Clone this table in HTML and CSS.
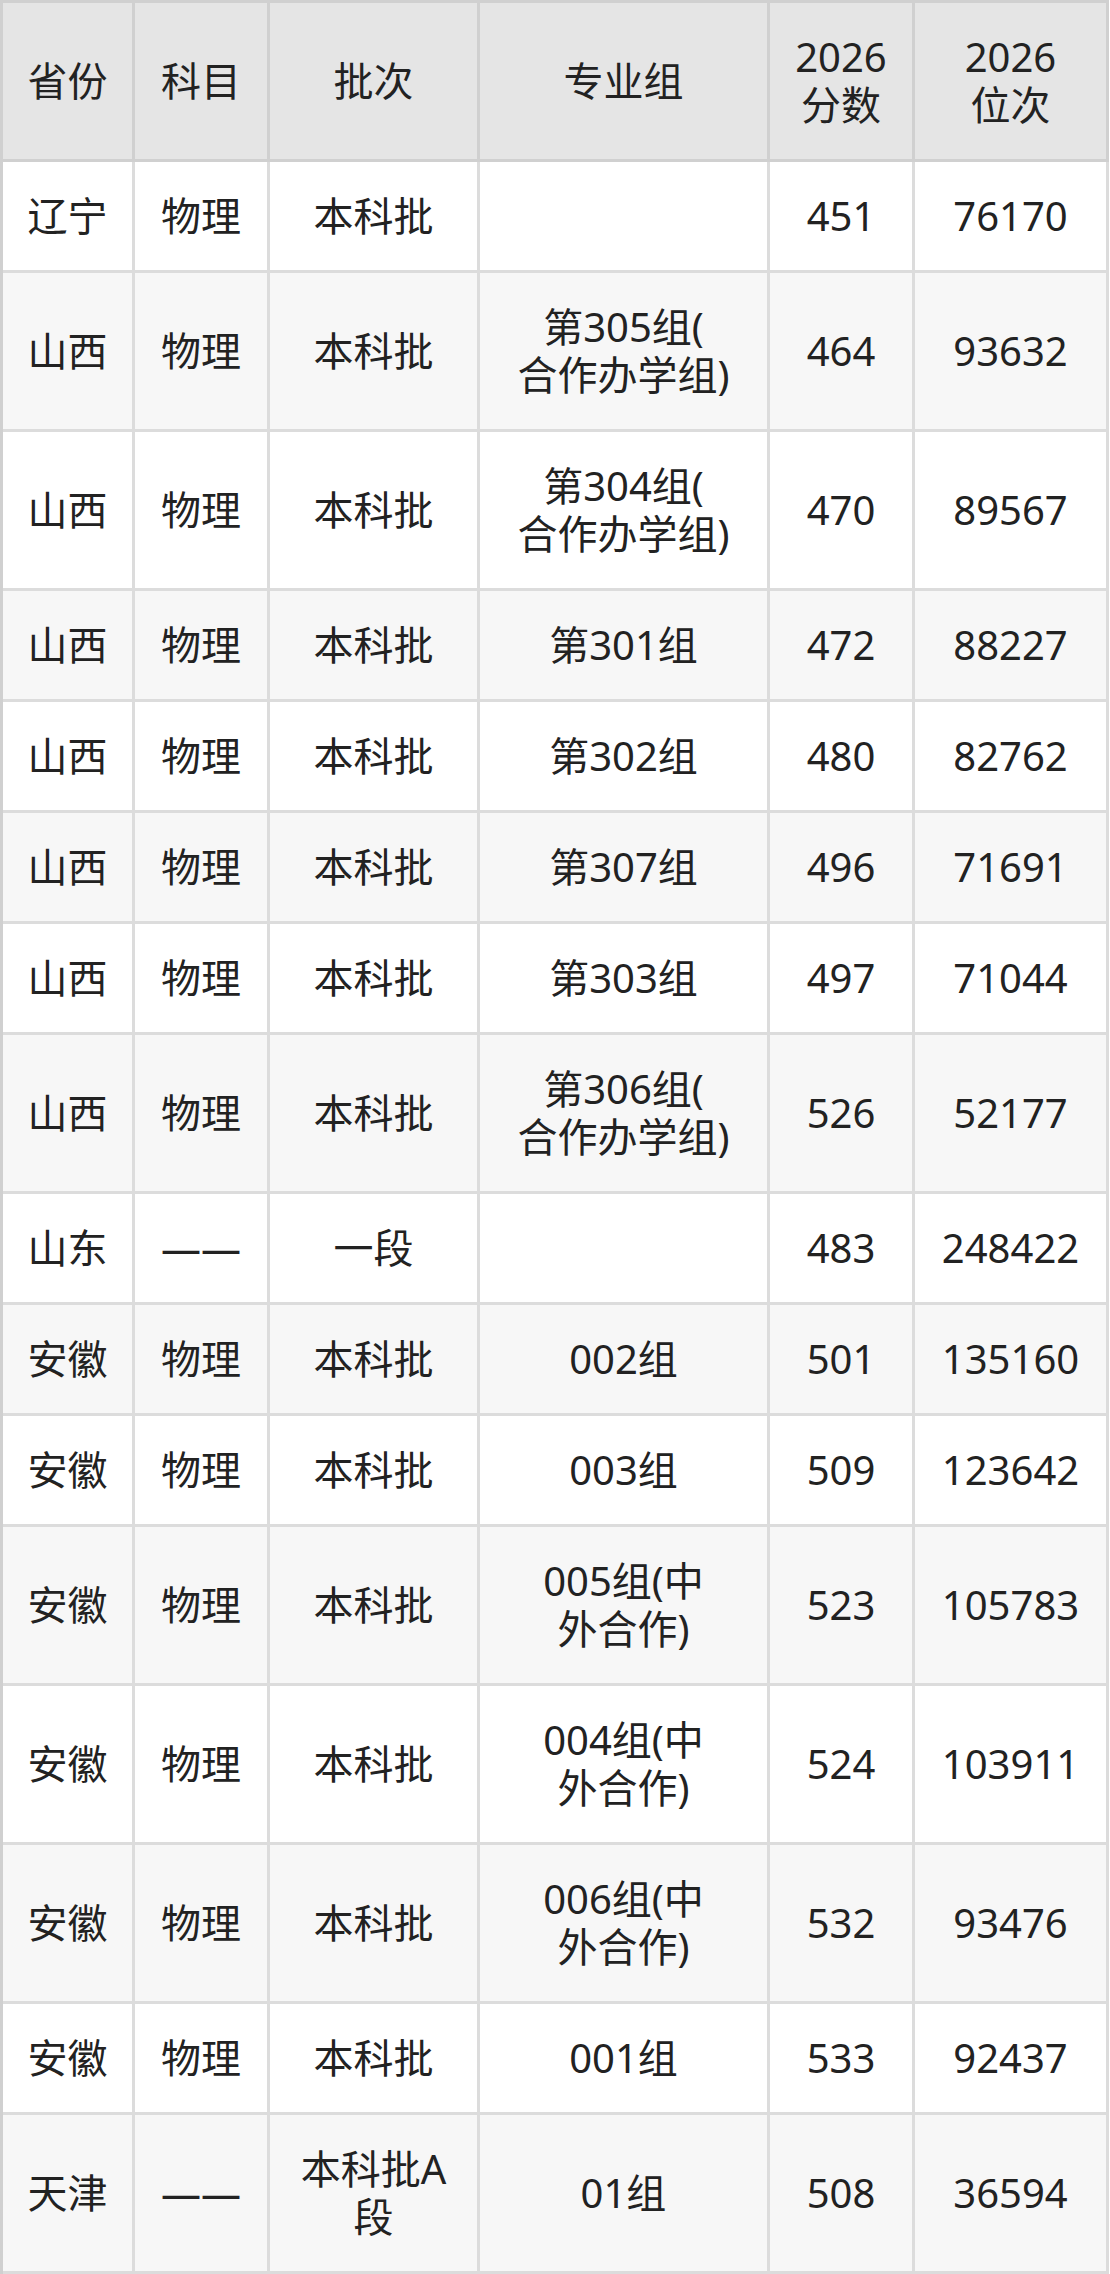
FILE: index.html
```html
<!DOCTYPE html>
<html lang="zh-CN">
<head>
<meta charset="utf-8">
<title>分数位次</title>
<link rel="stylesheet" href="styles.css">
</head>
<body>
<table class="score-table">
  <colgroup>
    <col class="c-prov">
    <col class="c-subj">
    <col class="c-batch">
    <col class="c-group">
    <col class="c-score">
    <col class="c-rank">
  </colgroup>
  <thead>
    <tr>
      <th>省份</th>
      <th>科目</th>
      <th>批次</th>
      <th>专业组</th>
      <th>2026<br>分数</th>
      <th>2026<br>位次</th>
    </tr>
  </thead>
  <tbody>
    <tr><td>辽宁</td><td>物理</td><td>本科批</td><td></td><td>451</td><td>76170</td></tr>
    <tr><td>山西</td><td>物理</td><td>本科批</td><td>第305组(<br>合作办学组)</td><td>464</td><td>93632</td></tr>
    <tr><td>山西</td><td>物理</td><td>本科批</td><td>第304组(<br>合作办学组)</td><td>470</td><td>89567</td></tr>
    <tr><td>山西</td><td>物理</td><td>本科批</td><td>第301组</td><td>472</td><td>88227</td></tr>
    <tr><td>山西</td><td>物理</td><td>本科批</td><td>第302组</td><td>480</td><td>82762</td></tr>
    <tr><td>山西</td><td>物理</td><td>本科批</td><td>第307组</td><td>496</td><td>71691</td></tr>
    <tr><td>山西</td><td>物理</td><td>本科批</td><td>第303组</td><td>497</td><td>71044</td></tr>
    <tr><td>山西</td><td>物理</td><td>本科批</td><td>第306组(<br>合作办学组)</td><td>526</td><td>52177</td></tr>
    <tr><td>山东</td><td>——</td><td>一段</td><td></td><td>483</td><td>248422</td></tr>
    <tr><td>安徽</td><td>物理</td><td>本科批</td><td>002组</td><td>501</td><td>135160</td></tr>
    <tr><td>安徽</td><td>物理</td><td>本科批</td><td>003组</td><td>509</td><td>123642</td></tr>
    <tr><td>安徽</td><td>物理</td><td>本科批</td><td>005组(中<br>外合作)</td><td>523</td><td>105783</td></tr>
    <tr><td>安徽</td><td>物理</td><td>本科批</td><td>004组(中<br>外合作)</td><td>524</td><td>103911</td></tr>
    <tr><td>安徽</td><td>物理</td><td>本科批</td><td>006组(中<br>外合作)</td><td>532</td><td>93476</td></tr>
    <tr><td>安徽</td><td>物理</td><td>本科批</td><td>001组</td><td>533</td><td>92437</td></tr>
    <tr><td>天津</td><td>——</td><td>本科批A<br>段</td><td>01组</td><td>508</td><td>36594</td></tr>
  </tbody>
</table>
</body>
</html>
```

FILE: styles.css
```css
html, body {
  margin: 0;
  padding: 0;
  background: #ffffff;
}

.score-table {
  width: 1109px;
  table-layout: fixed;
  border-collapse: separate;
  border-spacing: 0;
  border-top: 3px solid #d0d0d0;
  border-left: 3px solid #d0d0d0;
  font-family: "Noto Sans", "Noto Sans CJK SC", sans-serif;
  font-size: 40px;
  line-height: 48px;
  color: #222222;
}

.c-prov { width: 132px; }
.c-subj { width: 135px; }
.c-batch { width: 210px; }
.c-group { width: 290px; }
.c-score { width: 145px; }
.c-rank { width: 194px; }

.score-table th,
.score-table td {
  box-sizing: border-box;
  padding: 30px 6px;
  text-align: center;
  vertical-align: middle;
  font-weight: normal;
  border-right: 3px solid #dcdcdc;
  border-bottom: 3px solid #dcdcdc;
  white-space: nowrap;
}

.score-table th {
  background: #e5e5e5;
  border-right-color: #d0d0d0;
  border-bottom-color: #d0d0d0;
}

.score-table tbody tr:nth-child(odd) td {
  background: #ffffff;
}

.score-table tbody tr:nth-child(even) td {
  background: #f7f7f7;
}
```
